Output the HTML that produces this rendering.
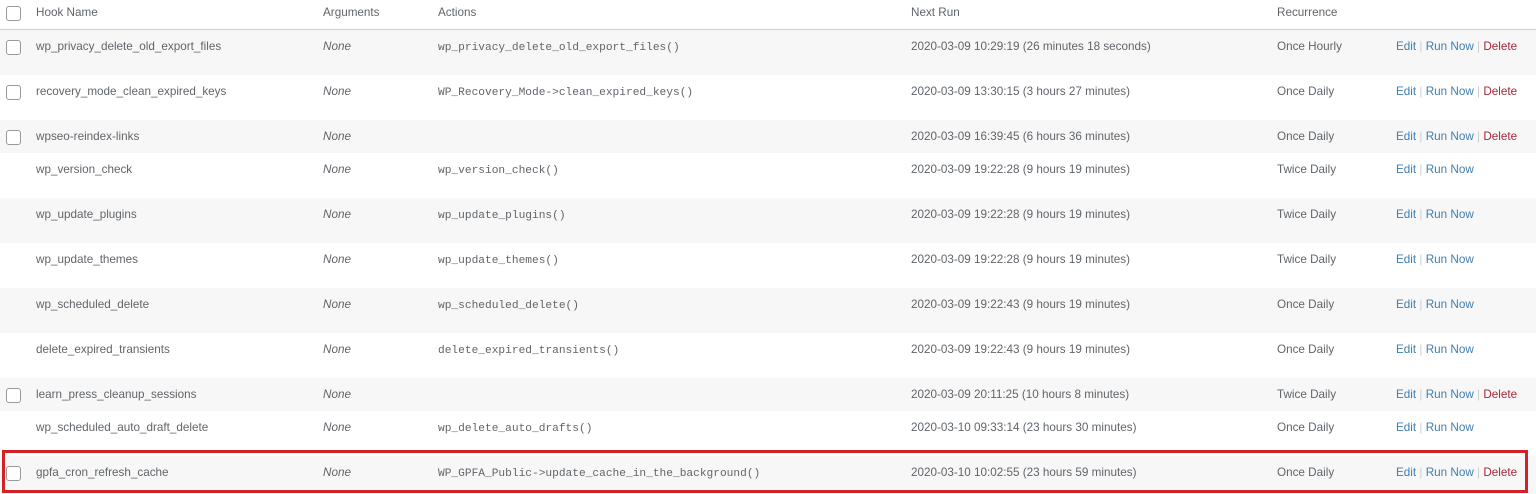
<!DOCTYPE html>
<html><head><style>
body{margin:0;width:1536px;height:494px;background:#fff;font-family:"Liberation Sans",sans-serif;font-size:11.7px;color:#60656a;position:relative;overflow:hidden}
.r{position:absolute;left:0;width:1536px}
.g{background:#f7f7f7}
.t{position:absolute;white-space:nowrap;line-height:16px}
.cb{position:absolute;left:6px;width:13px;height:13px;border:1px solid #999;border-radius:3px;background:#fff}
.m{font-family:"Liberation Mono",monospace;font-size:11.2px;margin-top:1px}
i{font-style:italic}
.a{color:#3f7fb0}.d{color:#a3283a}.s{color:#ccc}
</style></head><body>
<div class="r" style="top:0;height:29px;border-bottom:1px solid #ccd0d4"></div>
<div class="cb" style="top:6px"></div>
<div class="t" style="left:36px;top:5px">Hook Name</div>
<div class="t" style="left:323px;top:5px">Arguments</div>
<div class="t" style="left:438px;top:5px">Actions</div>
<div class="t" style="left:911px;top:5px">Next Run</div>
<div class="t" style="left:1277px;top:5px">Recurrence</div>
<div id="rows"></div>
<script>
var R=[
[30,45,1,'wp_privacy_delete_old_export_files','wp_privacy_delete_old_export_files()','2020-03-09 10:29:19 (26 minutes 18 seconds)','Once Hourly',1],
[75,45,1,'recovery_mode_clean_expired_keys','WP_Recovery_Mode->clean_expired_keys()','2020-03-09 13:30:15 (3 hours 27 minutes)','Once Daily',1],
[120,33,1,'wpseo-reindex-links','','2020-03-09 16:39:45 (6 hours 36 minutes)','Once Daily',1],
[153,45,0,'wp_version_check','wp_version_check()','2020-03-09 19:22:28 (9 hours 19 minutes)','Twice Daily',0],
[198,45,0,'wp_update_plugins','wp_update_plugins()','2020-03-09 19:22:28 (9 hours 19 minutes)','Twice Daily',0],
[243,45,0,'wp_update_themes','wp_update_themes()','2020-03-09 19:22:28 (9 hours 19 minutes)','Twice Daily',0],
[288,45,0,'wp_scheduled_delete','wp_scheduled_delete()','2020-03-09 19:22:43 (9 hours 19 minutes)','Once Daily',0],
[333,45,0,'delete_expired_transients','delete_expired_transients()','2020-03-09 19:22:43 (9 hours 19 minutes)','Once Daily',0],
[378,33,1,'learn_press_cleanup_sessions','','2020-03-09 20:11:25 (10 hours 8 minutes)','Twice Daily',1],
[411,45,0,'wp_scheduled_auto_draft_delete','wp_delete_auto_drafts()','2020-03-10 09:33:14 (23 hours 30 minutes)','Once Daily',0],
[456,38,1,'gpfa_cron_refresh_cache','WP_GPFA_Public->update_cache_in_the_background()','2020-03-10 10:02:55 (23 hours 59 minutes)','Once Daily',1]];
var h='';R.forEach(function(r,i){var y=r[0],ty=y+9;
h+='<div class="r'+(i%2==0?' g':'')+'" style="top:'+y+'px;height:'+r[1]+'px"></div>';
if(r[2])h+='<div class="cb" style="top:'+(y+10)+'px"></div>';
h+='<div class="t" style="left:36px;top:'+ty+'px">'+r[3]+'</div>';
h+='<div class="t" style="left:323px;top:'+ty+'px"><i>None</i></div>';
h+='<div class="t m" style="left:438px;top:'+ty+'px">'+r[4].replace('>','&gt;')+'</div>';
h+='<div class="t" style="left:911px;top:'+ty+'px">'+r[5]+'</div>';
h+='<div class="t" style="left:1277px;top:'+ty+'px">'+r[6]+'</div>';
h+='<div class="t" style="left:1396px;top:'+ty+'px"><span class="a">Edit</span> <span class="s">|</span> <span class="a">Run Now</span>'+(r[7]?' <span class="s">|</span> <span class="d">Delete</span>':'')+'</div>';});
document.getElementById('rows').innerHTML=h;
</script>
<div style="position:absolute;left:2px;top:450px;width:1520px;height:37px;border:3px solid #d42029"></div>
</body></html>
